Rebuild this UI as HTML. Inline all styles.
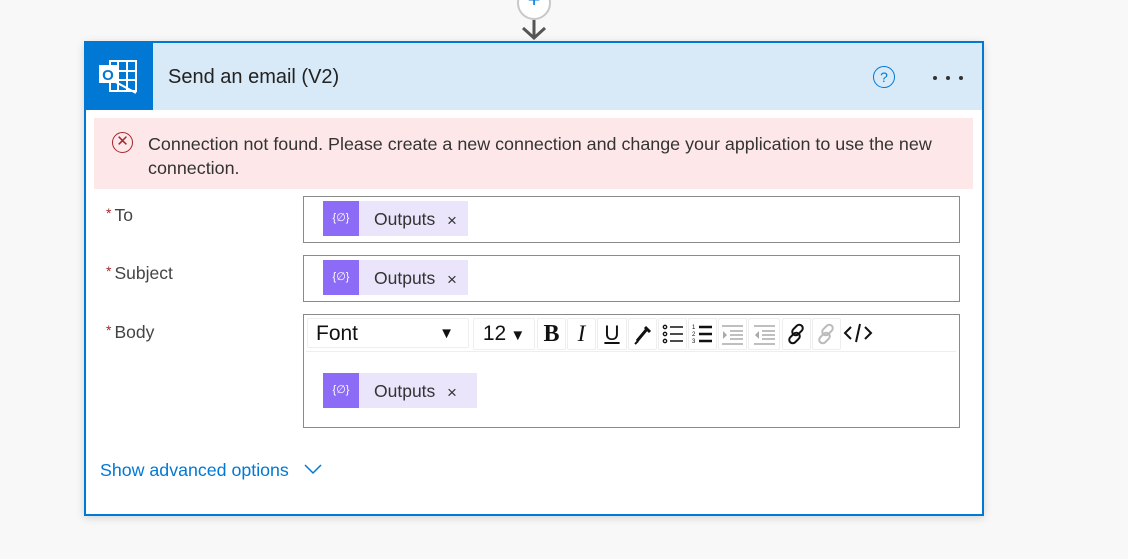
<html><head><style>
body{margin:0;width:1128px;height:559px;background:#f8f8f8;font-family:"Liberation Sans",sans-serif;position:relative;overflow:hidden}
.a{position:absolute}
.card{left:84px;top:41px;width:896px;height:471px;border:2px solid #0078d4;background:#fff;box-shadow:0 2px 8px rgba(0,0,0,.15)}
.hdr{left:0;top:0;width:896px;height:67px;background:#d8e9f7}
.ico{left:0;top:0;width:67px;height:67px;background:#0078d4}
.lbl{font-size:17.5px;color:#444}
.lbl b{color:#a4262c;font-weight:normal;font-size:14px;vertical-align:top;margin-right:3px}
.box{border:1px solid #8a8a8a;background:#fff}
.tok{height:35px;background:#ebe5fb;font-size:17.5px;color:#333}
.tok .p{position:absolute;left:0;top:0;width:36px;height:35px;background:#8c6cf6;color:#fff;font-size:11px;text-align:center;line-height:35px}
.tok .t{position:absolute;left:51px;top:8px}
.tok .x{position:absolute;left:124px;top:10px;font-size:17px}
.tb{top:3px;height:30px;border:1px solid #eee;border-radius:2px;font-size:21px;text-align:center;line-height:30px;color:#111}
.tb svg{position:absolute;left:0;top:0}
</style></head><body>
<div class="a" style="left:517px;top:-14px;width:34px;height:34px;border:2px solid #c8c8c8;border-radius:50%;background:#fff;box-sizing:border-box;text-align:center;color:#0078d4;font-size:22px;line-height:24px">+</div>
<svg class="a" style="left:520px;top:20px" width="28" height="22"><path d="M14 0V18M3 8L14 18L25 8" stroke="#555" stroke-width="3" fill="none"/></svg>
<div class="a card">
 <div class="a hdr"></div>
 <div class="a ico"><svg width="67" height="67"><rect x="24" y="18" width="26" height="30" fill="none" stroke="#fff" stroke-width="2"/><path d="M32 18V48M41 18V48M24 28H50M24 37H50" stroke="#fff" stroke-width="2"/><path d="M24 36L50 50" stroke="#fff" stroke-width="2"/><rect x="13" y="22" width="18" height="18" fill="#fff"/><text x="22" y="37" fill="#0078d4" font-size="15" font-weight="bold" text-anchor="middle" font-family="Liberation Sans">O</text></svg></div>
 <div class="a" style="left:82px;top:23px;font-size:20px;color:#222">Send an email (V2)</div>
 <div class="a" style="left:787px;top:23px;width:20px;height:20px;border:1.5px solid #0078d4;border-radius:50%;color:#0078d4;font-size:14px;text-align:center;line-height:20px">?</div>
 <svg class="a" style="left:845px;top:31px" width="36" height="8"><circle cx="4" cy="4" r="2" fill="#333"/><circle cx="17" cy="4" r="2" fill="#333"/><circle cx="30" cy="4" r="2" fill="#333"/></svg>
 <div class="a" style="left:8px;top:75px;width:879px;height:71px;background:#fde7e9"></div>
 <div class="a" style="left:26px;top:89px;width:19px;height:19px;border:1.5px solid #a4262c;border-radius:50%;color:#a4262c;text-align:center;line-height:18px;font-size:15px">✕</div>
 <div class="a" style="left:62px;top:89px;font-size:17.9px;color:#333;line-height:24px;width:830px">Connection not found. Please create a new connection and change your application to use the new connection.</div>
 <div class="a lbl" style="left:20px;top:162px"><b>*</b>To</div>
 <div class="a lbl" style="left:20px;top:220px"><b>*</b>Subject</div>
 <div class="a lbl" style="left:20px;top:279px"><b>*</b>Body</div>
 <div class="a box" style="left:217px;top:153px;width:655px;height:45px"><div class="a tok" style="left:19px;top:4px;width:145px"><div class="p">{∅}</div><div class="t">Outputs</div><div class="x">×</div></div></div>
 <div class="a box" style="left:217px;top:212px;width:655px;height:45px"><div class="a tok" style="left:19px;top:4px;width:145px"><div class="p">{∅}</div><div class="t">Outputs</div><div class="x">×</div></div></div>
 <div class="a box" style="left:217px;top:271px;width:655px;height:112px">
  <div class="a" style="left:2px;top:2px;width:650px;height:34px;border-bottom:1px solid #eee"></div>
  <div class="a tb" style="left:3px;width:162px;text-align:left;padding-left:8px;box-sizing:border-box">Font<span style="position:absolute;right:14px;font-size:15px">▼</span></div>
  <div class="a tb" style="left:169px;width:60px">12<span style="font-size:15px"> ▼</span></div>
  <div class="a tb" style="left:233px;width:27px;font-weight:bold;font-family:'Liberation Serif';font-size:24px">B</div>
  <div class="a tb" style="left:263px;width:27px;font-style:italic;font-family:'Liberation Serif';font-size:23px">I</div>
  <div class="a tb" style="left:293px;width:28px;text-decoration:underline">U</div>
  <div class="a tb" style="left:324px;width:27px"><svg width="27" height="30"><path d="M8 22L18 10M16 8L21 13" stroke="#111" stroke-width="3"/><path d="M6 25L9 22" stroke="#111" stroke-width="2"/></svg></div>
  <div class="a tb" style="left:354px;width:27px"><svg width="27" height="30"><g fill="none" stroke="#111" stroke-width="1.3"><circle cx="6" cy="8" r="1.7"/><circle cx="6" cy="15" r="1.7"/><circle cx="6" cy="22" r="1.7"/></g><path d="M11 8H24M11 15H24M11 22H24" stroke="#111" stroke-width="1.5"/></svg></div>
  <div class="a tb" style="left:384px;width:27px"><svg width="27" height="30"><text x="3" y="10" font-size="6" fill="#111">1</text><text x="3" y="17" font-size="6" fill="#111">2</text><text x="3" y="24" font-size="6" fill="#111">3</text><path d="M10 8H23M10 15H23M10 22H23" stroke="#111" stroke-width="2.5"/></svg></div>
  <div class="a tb" style="left:414px;width:27px"><svg width="27" height="30"><path d="M3 7H24M11 12H24M11 16H24M11 20H24M3 25H24" stroke="#aaa" stroke-width="1.6"/><path d="M4 12L8 16L4 20Z" fill="#aaa"/></svg></div>
  <div class="a tb" style="left:444px;width:30px"><svg width="30" height="30"><path d="M5 7H26M13 12H26M13 16H26M13 20H26M5 25H26" stroke="#aaa" stroke-width="1.6"/><path d="M10 12L6 16L10 20Z" fill="#aaa"/></svg></div>
  <div class="a tb" style="left:478px;width:27px"><svg width="27" height="30"><g fill="none" stroke="#111" stroke-width="2"><rect x="11" y="5" width="7" height="12" rx="3.5" transform="rotate(45 14.5 11)"/><rect x="8" y="13" width="7" height="12" rx="3.5" transform="rotate(45 11.5 19)"/></g></svg></div>
  <div class="a tb" style="left:508px;width:27px"><svg width="27" height="30"><g fill="none" stroke="#bbb" stroke-width="2"><rect x="11" y="5" width="7" height="12" rx="3.5" transform="rotate(45 14.5 11)"/><rect x="8" y="13" width="7" height="12" rx="3.5" transform="rotate(45 11.5 19)"/></g></svg></div>
  <div class="a tb" style="left:538px;width:32px;border:none"><svg width="32" height="30"><path d="M9 9L3 15L9 21M23 9L29 15L23 21M18 6L14 24" fill="none" stroke="#111" stroke-width="2"/></svg></div>
  <div class="a tok" style="left:19px;top:58px;width:154px"><div class="p">{∅}</div><div class="t">Outputs</div><div class="x">×</div></div>
 </div>
 <div class="a" style="left:14px;top:417px;font-size:17.8px;color:#0078d4">Show advanced options</div>
 <svg class="a" style="left:217px;top:420px" width="20" height="12"><path d="M2 2L10 10L18 2" fill="none" stroke="#0078d4" stroke-width="1.5"/></svg>
</div>
</body></html>
